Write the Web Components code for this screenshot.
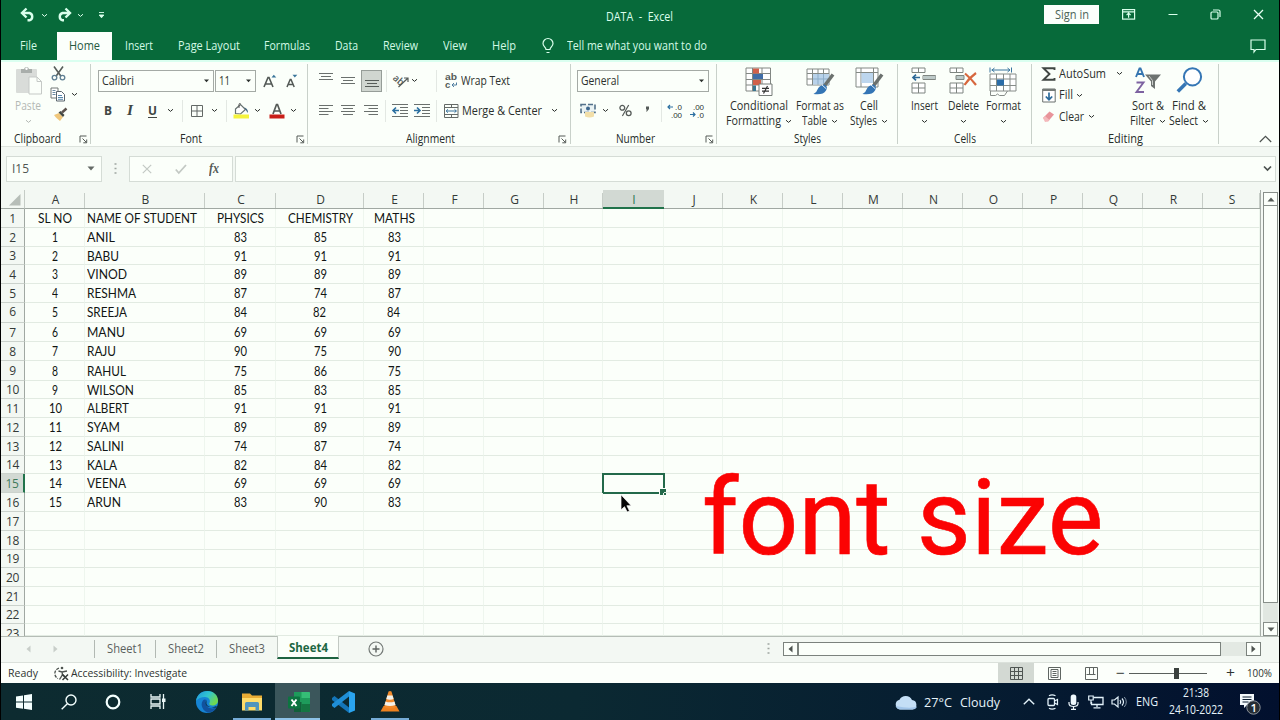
<!DOCTYPE html>
<html lang="en">
<head>
<meta charset="utf-8">
<title>DATA - Excel</title>
<style>
  body {
    margin: 0;
    width: 1280px;
    height: 720px;
    overflow: hidden;
    background: #000;
    font: 12px "Open Sans", "Noto Sans", sans-serif;
    color: #2b302d;
  }
</style>
</head>
<body>
<excel-window></excel-window>

<script>
// [width, height, markup]
const ICONS = {
  chev: [7, 5, `<path d="M1 1.2 3.5 3.4 6 1.2" fill="none" stroke="currentColor"/>`],
  tri: [7, 4, `<path d="M1 .5h5L3.500 3.200z" fill="currentColor"/>`],
  undo: [16, 14, `<path d="M2.500 5h7a3.800 3.800 0 0 1 0 7.300H7.500" fill="none" stroke="#d9ffec" stroke-width="2.400"/><path d="M6.500.5 2 5l4.500 4.500" fill="none" stroke="#d9ffec" stroke-width="2.400"/>`],
  redo: [16, 14, `<path d="M13 5H6.500a3.800 3.800 0 0 0 0 7.300H8" fill="none" stroke="#d9ffec" stroke-width="2.400"/><path d="M9.500.5 14 5 9.500 9.500" fill="none" stroke="#d9ffec" stroke-width="2.400"/>`],
  qat: [7, 7, `<path d="M1 .5h5M1.200 3h4.600L3.500 5.800z" fill="#d9ffec" stroke="#d9ffec" stroke-width=".9"/>`],
  ribbonopt: [14, 11, `<rect x=".6" y=".6" width="12" height="9.500" fill="none" stroke="#d9ffec" stroke-width="1.200"/><path d="M.6 2.800h12M6.600 8.800V4.500M4.600 6.200l2-2 2 2" fill="none" stroke="#d9ffec" stroke-width="1.200"/>`],
  min: [10, 10, `<path d="M.5 4.500h9" stroke="#d9ffec"/>`],
  restore: [11, 11, `<rect x="1" y="3" width="7" height="7" rx="1" fill="none" stroke="#d9ffec" stroke-width="1.200"/><path d="M3 1h5.500a1.500 1.500 0 0 1 1.500 1.500V8" fill="none" stroke="#d9ffec" stroke-width="1.200"/>`],
  close: [11, 11, `<path d="m1 1 9 9m0-9-9 9" stroke="#e8fff3" stroke-width="1.300"/>`],
  comment: [16, 14, `<path d="M1 1h14v9.500H6L4 13v-2.500H1z" fill="none" stroke="#d9ffec" stroke-width="1.200"/>`],
  bulb: [12, 16, `<path d="M4 11.500C4 9 1 8.500 1 5.500a5 5 0 0 1 10 0c0 3-3 3.500-3 6zM4.500 14.500h3" fill="none" stroke="#d9ffec" stroke-width="1.200"/>`],
  launcher: [9, 9, `<path d="M1 7.500V1h6.500M3.500 3.500l4 4M7.700 4.500v3.300H4.300" fill="none" stroke="#555b57"/>`],
  paste: [28, 30, `<rect x="1" y="4" width="21" height="24" rx="1" fill="#d9dcd9"/><path d="M6 4h3a2.600 2.600 0 0 1 5 0h3v4H6z" fill="#a9aeab"/><circle cx="11.500" cy="3.800" r="1.200" fill="#fff"/><path d="M14 12h8l4.500 4.500V29H14z" fill="#fbfffa" stroke="#c5c9c6"/><path d="M22 12v4.500h4.500" fill="none" stroke="#c5c9c6"/>`],
  cut: [15, 15, `<path d="M3 .5 9.800 10M12 .5 5.200 10" stroke="#575d5a" stroke-width="1.600"/><circle cx="3.500" cy="11.600" r="2.300" fill="none" stroke="#5f7f93" stroke-width="1.300"/><circle cx="11.500" cy="11.600" r="2.300" fill="none" stroke="#5f7f93" stroke-width="1.300"/>`],
  copy: [16, 15, `<path d="M1 1h7v10H1z" fill="#fff" stroke="#737976"/><path d="M2.500 3.500h3M2.500 5.500h3M2.500 7.500h3" stroke="#6a8ba3"/><path d="M6.500 4.500h5l3 3v6.500h-8z" fill="#fff" stroke="#59646c"/><path d="M8 8.500h4M8 10.500h5M8 12.300h5" stroke="#5687ac"/>`],
  painter: [15, 14, `<path d="m1 8 5-2 4 4-3 4C5 12 3 11 1 8z" fill="#f0c77c"/><path d="m5.500 5.500 2-1.500 4 4-1.500 2z" fill="#424844"/><path d="m9 5.500 4.500-4" stroke="#5b504c" stroke-width="2.500"/>`],
  agrow: [14, 14, `<path d="M1 13 5 3.500h1L10 13M2.500 10h6" fill="none" stroke="#525855" stroke-width="1.600"/><path d="m8.500 3.500 2.300-2.800 2.500 2.800z" fill="#39759a"/>`],
  ashrink: [12, 14, `<path d="M1 13 4.200 5.500h.8L8.200 13M2 10.500h5.200" fill="none" stroke="#525855" stroke-width="1.500"/><path d="m6.500.700 2.300 2.800L11.300.700z" fill="#39759a"/>`],
  borders: [14, 14, `<path d="M1.500 1.500h11v11h-11zM7 1.500v11M1.500 7h11" fill="none" stroke="#636966"/>`],
  fill: [17, 16, `<path d="m2.500 6 5-4.500 5 5-5 4.500-5-.5z" fill="#fff" stroke="#66716f" stroke-width="1.200"/><path d="M6 5V1.500q0-1.300 1.500-1" fill="none" stroke="#555"/><path d="M11 4.500q4 .5 4 5.500-2-2-2.500-4z" fill="#3f6682"/><path d="M.5 11.500h15.500v4H.5z" fill="#f4f33c"/>`],
  fontcolor: [16, 16, `<path d="M4 11 7.500 1.500h1L12 11M5 8h6" fill="none" stroke="#565b58" stroke-width="1.700"/><path d="M.5 11.500h15v4H.5z" fill="#c91e18"/>`],
  top: [14, 9, `<path d="M0 1.500h14M2 4.500h10M0 7.500h14" stroke="#6a706d"/>`],
  bottom: [14, 9, `<path d="M0 1.500h14M2 4.500h10M0 7.500h14" stroke="#565c58"/>`],
  left: [14, 11, `<path d="M0 .5h14M0 3.500h9.500M0 6.500h14M0 9.500h9.500" stroke="#6a706d"/>`],
  center: [14, 11, `<path d="M0 .5h14M2 3.500h10M0 6.500h14M2 9.500h10" stroke="#6a706d"/>`],
  right: [14, 11, `<path d="M0 .5h14M4.500 3.500H14M0 6.500h14M4.500 9.500H14" stroke="#6a706d"/>`],
  orient: [16, 14, `<text x="0" y="9" font-size="10" font-weight="600" fill="#555b58" transform="rotate(42 3 7) translate(-1 -1)" textLength="11" lengthAdjust="spacingAndGlyphs">ab</text><path d="m5.500 13 9-8.500M11 4h4v4" fill="none" stroke="#555b58" stroke-width="1.200"/>`],
  wrap: [12, 17, `<g font-family="Liberation Sans, sans-serif" font-weight="700" fill="#555b58"><text x="0" y="7.500" font-size="9.500" textLength="12" lengthAdjust="spacingAndGlyphs">ab</text><text x="0" y="16" font-size="9.500">c</text></g><path d="M11.500 10.500v2.500H7M9 11l-2 2 2 2" fill="none" stroke="#4d7c9f"/>`],
  outdent: [16, 13, `<path d="M0 .5h16M8 3.500h8M8 6.500h8M8 9.500h8M0 12.500h16" stroke="#6a706d"/><path d="M7 6.500H1.500M4 3.500l-3 3 3 3" fill="none" stroke="#2b6fa0" stroke-width="1.600"/>`],
  indent: [16, 13, `<path d="M0 .5h16M8 3.500h8M8 6.500h8M8 9.500h8M0 12.500h16" stroke="#6a706d"/><path d="M0 6.500h5.500M3 3.500l3 3-3 3" fill="none" stroke="#2b6fa0" stroke-width="1.600"/>`],
  merge: [15, 14, `<path d="M.5.5h13.500v13H.5zM.5 3.500H14M.5 10.500H14M7.500.5v3M7.500 10.500v3" fill="none" stroke="#646a67"/><path d="M2 7h10.500M4 5.300 2.200 7 4 8.700m6.500-3.400L12.300 7l-1.800 1.700" fill="none" stroke="#39739c"/>`],
  money: [17, 15, `<path d="M1 1.500h14v8H1z" fill="#e9f2f3" stroke="#53718a" stroke-width="1.600" stroke-dasharray="5 2"/><circle cx="8" cy="5.500" r="2" fill="#3e678d"/><path d="M5 9h9v4.500q-4.500 2-9 0z" fill="#f2dfa9"/>`],
  percent: [13, 13, `<circle cx="3.300" cy="3.800" r="2.400" fill="none" stroke="#555b58" stroke-width="1.300"/><circle cx="9.700" cy="9.200" r="2.400" fill="none" stroke="#555b58" stroke-width="1.300"/><path d="m9.700 1-6.300 11" stroke="#555b58" stroke-width="1.200"/>`],
  comma: [5, 7, `<path d="M1 .500h3V3L2 5.500H1L2 3.500H1z" fill="#555b58"/>`],
  incdec: [16, 15, `<g font-family="Liberation Sans, sans-serif" font-size="8" fill="#2c332f"><text x="8" y="6.500" textLength="7">.0</text><text x="4" y="14.500" textLength="11">.00</text></g><path d="M6 4H1M3 2 1 4l2 2" fill="none" stroke="#2b6fa0" stroke-width="1.200"/>`],
  decdec: [16, 15, `<g font-family="Liberation Sans, sans-serif" font-size="8" fill="#2c332f"><text x="3" y="6.500" textLength="11">.00</text><text x="7" y="14.500" textLength="7">.0</text></g><path d="M0 11.500h5M3 9.500l2 2-2 2" fill="none" stroke="#2b6fa0" stroke-width="1.200"/>`],
  cond: [28, 29, `<path d="M1 1h24.500v23H1zM1 6.500h24.500M1 12.500h24.500M1 18h24.500M7.500 1v23M17 1v23" fill="#fff" stroke="#828783"/><path d="M8 1.500h6v5H8zM8 13h8v5H8z" fill="#d1604a"/><path d="M8 7h10v5H8z" fill="#416da7"/><path d="M8 18.500h3V24H8z" fill="#39758f"/><path d="M14 17h13v11.500H14z" fill="#fff" stroke="#777d79"/><path d="M17 21.300h7M17 24.200h7M22.500 19l-4 7.500" stroke="#333" stroke-width="1.200"/>`],
  fmttable: [29, 29, `<path d="M1 2h22v16H1zM1 6.500h22M1 12h22M6.500 2v16M12 2v16M17.500 2v16" fill="#fff" stroke="#838985"/><path d="M7 7h16v10.500H7z" fill="#b9d2ea"/><path d="M7 12h16M12 7v10M17.500 7v10" stroke="#8dadc9"/><path d="m27 7.500-9 12" stroke="#6b716e" stroke-width="3.500"/><path d="M18.500 17.500q4 2.500 1.500 6-3 5-12.500 3.500 3-1 4-4.500 1.500-4 7-5z" fill="#3475b5"/><path d="m16 18 4.500 4" stroke="#dfeaf3"/>`],
  cellstyle: [28, 29, `<path d="M1 1h22v19H1zM1 5.500h22M6 1v19M18.500 1v19" fill="#fff" stroke="#838985"/><path d="M6.500 6h11.500v10H6.500z" fill="#bdd6ee"/><path d="m27 7.500-9 12" stroke="#6b716e" stroke-width="3.500"/><path d="M18.500 17.500q4 2.500 1.500 6-3 5-12.500 3.500 3-1 4-4.500 1.500-4 7-5z" fill="#3475b5"/><path d="m16 18 4.500 4" stroke="#dfeaf3"/>`],
  insert: [26, 27, `<path d="M1 1h13v4.500H1zM7.500 1v4.500M1 16h13v10H1zM7.500 16v10M1 21h13M12 8.500h12.500v4H12zM18 8.500v4" fill="#fff" stroke="#7f8581"/><path d="M12.500 9h12v3h-12z" fill="#bdc9c8"/><path d="M9 10.500H2.500M5 7.700l-3 2.800 3 2.800" fill="none" stroke="#2e6997" stroke-width="1.700"/>`],
  delete: [29, 27, `<path d="M1 1h13v4.500H1zM7.500 1v4.500M1 16h13v10H1zM7.500 16v10M1 21h13" fill="#fff" stroke="#7f8581"/><path d="M7 8.500h8v4H7z" fill="#bdc9c8" stroke="#7f8581"/><path d="M16 6.500q6 5 11 11.500M27 6q-7 5-11.500 12" fill="none" stroke="#d7673e" stroke-width="2.200"/>`],
  format: [28, 30, `<path d="M1 .5v5M22.500.5v5M2.500 3h18.500M5.500 1 3 3l2.500 2M18.500 1 21 3l-2.500 2" fill="none" stroke="#39749e"/><path d="M1 7h26v17H1zM1 12h26M1 18.500h26M7.500 7v17M14.500 7v17M21 7v17" fill="#fff" stroke="#868c88"/><path d="M8 12.500h7v6H8z" fill="#2b6ca8"/><path d="M1.500 24v4.500h5l2-1.500 2 1.500h5l3-4.500" fill="none" stroke="#868c88"/>`],
  sigma: [14, 14, `<path d="M12.500 3V1.200H1.500l6 5.800-6 5.800h11V11" fill="none" stroke="#404643" stroke-width="1.900"/>`],
  filldown: [14, 15, `<path d="M.7 1h12.500v13H.7z" fill="#fff" stroke="#6b716e"/><path d="M.5 1h13v2H.5z" fill="#747a77"/><path d="M7 4.500v7M3.800 8.500 7 11.700l3.200-3.200" fill="none" stroke="#2c6b9b" stroke-width="1.700"/>`],
  clear: [13, 13, `<path d="m1 8 6.500-6.500 4.500 3L6 11.500z" fill="#e8949a"/><path d="m1 8 2-2 4.500 4L6 11.500l-3 .5z" fill="#f4b9bb"/>`],
  sort: [28, 27, `<path d="M2 10 5.500 1.500h1L10 10M3.500 7h5" fill="none" stroke="#3475b0" stroke-width="1.900"/><path d="M2.500 15.500h7l-7 9.500h7.500" fill="none" stroke="#7d62a1" stroke-width="1.900"/><path d="M11 7.500h16l-6 7v7.500l-4-3v-4.500z" fill="#6d7370"/><path d="m15 9 3.500 4.500V18" fill="none" stroke="#cdd1ce"/>`],
  find: [27, 27, `<circle cx="16.500" cy="9.800" r="8.600" fill="#fff" stroke="#3576b5" stroke-width="2"/><path d="m9.800 16.500-8 8" stroke="#3576b5" stroke-width="3.500"/>`],
  collapse: [13, 8, `<path d="m.8 7 5.700-5.700L12.200 7" fill="none" stroke="#4c524f" stroke-width="1.200"/>`],
  dots: [3, 12, `<path d="M.5 1h2M.5 5.500h2M.5 10h2" stroke="#9fa5a1" stroke-width="1.500"/>`],
  cancel: [10, 10, `<path d="m.8.800 8.400 8.400m0-8.400L.8 9.200" stroke="#c3c9c4" stroke-width="1.200"/>`],
  enter: [12, 10, `<path d="m.8 5.500 3 3.500L11 1" fill="none" stroke="#c3c9c4" stroke-width="1.800"/>`],
  chevbold: [9, 7, `<path d="m1 1.500 3.500 3.500L8 1.500" fill="none" stroke="#4c524f" stroke-width="1.700"/>`],
  tril: [5, 8, `<path d="M4.500.5v7L.5 4z" fill="currentColor"/>`],
  trir: [5, 8, `<path d="M.5.5v7L4.500 4z" fill="currentColor"/>`],
  triu: [8, 5, `<path d="M.5 4.500h7L4 .5z" fill="currentColor"/>`],
  trid: [8, 5, `<path d="M.5.5h7L4 4.500z" fill="currentColor"/>`],
  plus: [16, 16, `<circle cx="8" cy="8" r="7" fill="none" stroke="#737976" stroke-width="1.200"/><path d="M4.500 8h7M8 4.500v7" stroke="#5d6360" stroke-width="1.400"/>`],
  access: [16, 15, `<path d="M6 2.200A5.500 5.500 0 0 0 5 12.500" fill="none" stroke="#4e5450" stroke-width="1.300" stroke-dasharray="3 1.200"/><circle cx="9" cy="2" r="1.300" fill="#4e5450"/><path d="m5.500 5 3.500 1 5-1M9.300 6v3l-2.800 4.500M9.500 8.500l2 2" fill="none" stroke="#4e5450" stroke-width="1.400"/><path d="m9.500 8.500 5.500 5.500m0-5.500L9.500 14" stroke="#333936" stroke-width="1.500"/>`],
  vnormal: [13, 13, `<path d="M.5.5h12v12H.5zM4.500.5v12M8.500.5v12M.5 4.500h12M.5 8.500h12" fill="none" stroke="#4f5552"/>`],
  vpage: [13, 13, `<path d="M.5.500h12v12H.5z" fill="none" stroke="#5f6562"/><path d="M3 2.500h7v8H3zM4.500 4.500h4M4.500 6.500h4M4.500 8.500h4" fill="none" stroke="#5f6562"/>`],
  vbreak: [13, 13, `<path d="M.5.500h12v12H.5zM4.500.500v7M8.500.500v7M1.500 7.500h9" fill="none" stroke="#5f6562"/>`],
  win: [16, 16, `<path d="m0 2.400 7-1V7.500H0zM8 1.200 16 0v7.500H8zM0 8.500h7v6.200l-7-1zM8 8.500h8V16l-8-1.200z" fill="#f4fffe"/>`],
  search: [16, 16, `<circle cx="10" cy="6" r="5" fill="none" stroke="#f4fffe" stroke-width="1.400"/><path d="M6.300 9.700.7 15.300" stroke="#f4fffe" stroke-width="1.400"/>`],
  cortana: [16, 16, `<circle cx="8" cy="8" r="6.300" fill="none" stroke="#f4fffe" stroke-width="2.200"/>`],
  taskview: [16, 15, `<path d="M1 0v3h9V0M1 15v-3h9v3M1 5h9v5H1zM13.500 0v15" fill="none" stroke="#e9f6f6" stroke-width="1.300"/><path d="M12 4.500h3.500V8H12z" fill="#e9f6f6"/>`],
  edge: [24, 24, `<defs><linearGradient id="e1" x1="0" y1="0" x2="1" y2=".5"><stop offset="0" stop-color="#2095dd"/><stop offset=".55" stop-color="#30c6cf"/><stop offset="1" stop-color="#70d84f"/></linearGradient></defs><circle cx="12" cy="12" r="11" fill="#1684d4"/><path d="M1 11C2 4.500 7 1 12.500 1 19 1 23 5.500 23 10.500c0 3.500-2.500 5-5.500 5-2.500 0-4-1-3-2.500 1.500-3-1-6-4.500-6-4 0-7 1.500-9 4z" fill="url(#e1)"/><path d="M9 9.500c-4 3-3 10 3.500 13 4 0 7.500-2 9-5-5 2-10 .5-11-3.500-.4-2 0-3.200 1-4.200z" fill="#11529e"/><path d="M11.500 10c-1.800 2-1.500 5 1 6.500 2.500 1.300 6 1 8.800-.5l.7 1.500c-4 1-9-.3-10.500-3.500z" fill="#0c304e"/>`],
  folder: [22, 20, `<path d="M1 1.500h8l2 2h10V18H1z" fill="#e9ad35"/><path d="M1 6h20v12.500H1z" fill="#ffdc69"/><path d="M4 11.500q0-1.500 1.500-1.500h11q1.500 0 1.500 1.500v7h-3.500V15h-7v3.500H4z" fill="#5195bd"/>`],
  excel: [24, 22, `<path d="M7 1h15q1 0 1 1v18q0 1-1 1H7z" fill="#1e9b5b"/><path d="M14.500 1H22q1 0 1 1v5h-8.500z" fill="#35bd76"/><path d="M7 11h7.500v10H7z" fill="#12603a"/><path d="M14.500 13H23v7q0 1-1 1h-7.500z" fill="#157542"/><rect x="1" y="5.500" width="12" height="12" rx="1" fill="#0d7440"/><path d="m4.500 8.500 5 6.500m0-6.500-5 6.500" stroke="#fff" stroke-width="1.900"/>`],
  vscode: [25, 24, `<path d="M18 1 24 3.500v17L18 23z" fill="#2aa4ef"/><path d="M1 8 3.500 6 18 17.500V23L1 10z" fill="#1475b8"/><path d="M1 16 3.500 18 18 6.500V1L1 14z" fill="#1f8ed6"/>`],
  vlc: [20, 23, `<path d="M3.500 16h13l3 5.500H.5z" fill="#ed8120"/><path d="M8.500 1.500q1.500-1 3 0L16 17q-6 3-12 0z" fill="#f18a2b"/><path d="m7.300 5.500 5.300.1 1 3.500q-3.600 1.300-7.300 0zM5.500 11.500q4.500 1.700 9 0l1 3.500q-5.500 2-11 0z" fill="#f3f1e9"/>`],
  cloud: [24, 18, `<path d="M6 16.500a5 5 0 0 1-.5-9.800A7 7 0 0 1 18 7a4.800 4.800 0 0 1 .5 9.500z" fill="#c4dff6"/><path d="M1.500 13q2 3.500 5 3.500h12q3.500 0 4.500-3-6 2.500-21.500-.5z" fill="#a2c6ea"/>`],
  up: [12, 7, `<path d="m.8 6.200 5.200-5 5.200 5" fill="none" stroke="#e3f2fa" stroke-width="1.400"/>`],
  cam: [12, 16, `<rect x="1" y="4.500" width="6.500" height="7" rx="1" fill="none" stroke="#e3f2fa" stroke-width="1.300"/><path d="m7.500 7 3-1.500v5l-3-1.500M2 1.800Q5 0 8.500 1.800M2 14.200q3 1.800 6.500 0" fill="none" stroke="#e3f2fa" stroke-width="1.200"/>`],
  mic: [11, 16, `<rect x="2.700" y=".5" width="5.600" height="10.500" rx="2.500" fill="#eef8fd"/><path d="M1 8v1.500q0 3 4.500 3t4.500-3V8M5.500 12.500v2.500M3 15.300h5" fill="none" stroke="#eef8fd" stroke-width="1.200"/>`],
  net: [16, 14, `<path d="M5.500 2.500H15v7H3.500V7M9 9.500V12M5.500 12.800h7" fill="none" stroke="#e3f2fa" stroke-width="1.300"/><path d="M.7 1h4.500v4H.7zM3 5v4" fill="none" stroke="#e3f2fa" stroke-width="1.200"/>`],
  sound: [17, 14, `<path d="M1 5h2.500L7 2v10L3.500 9H1z" fill="none" stroke="#e3f2fa" stroke-width="1.200"/><path d="M9 5q1.500 2 0 4M11 3.500q3 3.500 0 7" fill="none" stroke="#e3f2fa" stroke-width="1.200"/><path d="M13.300 2q4 5 0 10" fill="none" stroke="#8293a4"/>`],
  notif: [22, 24, `<path d="M1 2h14v11H8l-3 3v-3H1z" fill="#f3f9fc"/><path d="M3.500 5h9M3.500 7.500h9M3.500 10h6" stroke="#0a1c30"/><circle cx="14.500" cy="15.500" r="6.700" fill="#252d35" stroke="#8b9299"/><text x="11.500" y="19.700" font-size="11.500" font-weight="600" fill="#fff">1</text>`],
  cursor: [13, 20, `<path d="M2 .8v15l3.500-3.100 2.700 5.300 2.300-1.100-2.600-5.200h4.300z" fill="#050505" stroke="#fff" stroke-width=".7"/>`],
  corner: [12, 12, `<path d="M11.500 0v11.500H0z" fill="#b7beb8"/>`]
};

class UiIcon extends HTMLElement {
  connectedCallback() {
    const [w, h, body] = ICONS[this.getAttribute("name")];
    this.attachShadow({ mode: "open" }).innerHTML = `
      <style>
        :host { display: block; flex: none; width: ${w}px; height: ${h}px; margin-left: ${this.getAttribute("ml") || 0}px; }
        svg { display: block; overflow: visible; }
      </style>
      <svg width="${w}" height="${h}" viewBox="0 0 ${w} ${h}">${body}</svg>`;
  }
}

// Single line label, condensed or stretched to the width in "w"
class UiText extends HTMLElement {
  connectedCallback() {
    const w = Number(this.getAttribute("w"));
    this.attachShadow({ mode: "open" }).innerHTML = `
      <style>
        :host { display: block; flex: none; white-space: nowrap; width: ${w}px; line-height: 16px; margin-left: ${this.getAttribute("ml") || 0}px; }
        span { display: inline-block; transform-origin: 0 50%; }
        :host([underline]) span { text-decoration: underline; text-underline-offset: 2px; }
      </style>
      <span><slot></slot></span>`;
    const span = this.shadowRoot.querySelector("span");
    const natural = span.getBoundingClientRect().width;
    if (natural) span.style.transform = `scaleX(${w / natural})`;
  }
}

class TitleBar extends HTMLElement {
  constructor() {
    super();
    this.attachShadow({ mode: "open" }).innerHTML = `
      <style>
        :host { display: flex; align-items: center; height: 32px; background: #076a3a; color: #dcffed; box-sizing: border-box; }
        ui-icon { margin-top: -2px; }
        .title { margin-top: 1px; }
        .signin { width: 55px; height: 19px; margin: -3px 0 0 371px; background: #fbfffb; color: #4b6356; display: flex; align-items: center; justify-content: center; }
        .win { display: flex; align-items: center; margin-top: -3px; }
        .win ui-icon { margin-top: 0; }
      </style>
      <ui-icon name="undo" ml="19"></ui-icon><ui-icon name="chev" ml="5"></ui-icon>
      <ui-icon name="redo" ml="8"></ui-icon><ui-icon name="chev" ml="5"></ui-icon>
      <ui-icon name="qat" ml="14"></ui-icon>
      <ui-text class="title" w="67" ml="501">DATA&nbsp; -&nbsp; Excel</ui-text>
      <div class="signin"><ui-text w="34">Sign in</ui-text></div>
      <div class="win">
        <ui-icon name="ribbonopt" ml="23"></ui-icon><ui-icon name="min" ml="32"></ui-icon>
        <ui-icon name="restore" ml="32"></ui-icon><ui-icon name="close" ml="32"></ui-icon>
      </div>`;
  }
}

class RibbonTabs extends HTMLElement {
  constructor() {
    super();
    this.attachShadow({ mode: "open" }).innerHTML = `
      <style>
        :host { display: flex; align-items: center; height: 28px; background: #076a3a; color: #d3fae6; }
        .active { display: flex; align-items: center; justify-content: center; width: 55px; height: 28px; margin-left: 20px; background: #fbfffb; color: #26593f; }
      </style>
      <ui-text w="17" ml="19">File</ui-text>
      <div class="active"><ui-text w="31">Home</ui-text></div>
      <ui-text w="28" ml="13">Insert</ui-text>
      <ui-text w="62" ml="25">Page Layout</ui-text>
      <ui-text w="46" ml="24">Formulas</ui-text>
      <ui-text w="23" ml="25">Data</ui-text>
      <ui-text w="35" ml="25">Review</ui-text>
      <ui-text w="24" ml="25">View</ui-text>
      <ui-text w="24" ml="25">Help</ui-text>
      <ui-icon name="bulb" ml="26"></ui-icon>
      <ui-text w="140" ml="13">Tell me what you want to do</ui-text>
      <ui-icon name="comment" ml="543"></ui-icon>`;
  }
}

class RibbonGroup extends HTMLElement {
  constructor() {
    super();
    const launcher = this.hasAttribute("launcher");
    this.attachShadow({ mode: "open" }).innerHTML = `
      <style>
        :host { display: grid; grid-template-rows: 67px 16px; flex: none; box-sizing: border-box; height: 85px; padding-top: 2px; width: ${this.getAttribute("width")}px; background: linear-gradient(#c9d1ca, #c9d1ca) right 2px / 1px 80px no-repeat; }
        .body { display: flex; }
        .foot { display: flex; align-items: center; color: #262c29; }
        .name { flex: 1; display: flex; justify-content: center; }
        .foot.more .name { padding-right: 5px; }
      </style>
      <div class="body"><slot></slot></div>
      <div class="foot${launcher ? " more" : ""}">
        <div class="name"><ui-text w="${this.getAttribute("lw")}">${this.getAttribute("label")}</ui-text></div>
        ${launcher ? `<ui-icon name="launcher" style="margin-right:${this.getAttribute("launcher")}px"></ui-icon>` : ""}
      </div>`;
  }
}

class BigButton extends HTMLElement {
  constructor() {
    super();
    const a = (n) => this.getAttribute(n);
    this.attachShadow({ mode: "open" }).innerHTML = `
      <style>
        :host { display: grid; grid-template-rows: 33px 16px 14px; justify-items: center; flex: none; width: ${a("width")}px; padding-top: 1px; margin-left: ${a("ml") || 0}px; }
        :host([dim]) { color: #b4b9b5; }
        .pic { padding-top: 2px; }
        :host([dim]) .pic { padding: 0 0 0 2px; }
        .second { display: flex; align-items: center; gap: 4px; }
      </style>
      <div class="pic"><ui-icon name="${a("icon")}"></ui-icon></div>
      <ui-text w="${a("w1")}">${a("l1")}</ui-text>
      <div class="second">${a("l2") ? `<ui-text w="${a("w2")}">${a("l2")}</ui-text>` : ""}<ui-icon name="chev"></ui-icon></div>`;
  }
}

// Bordered dropdown
class ComboBox extends HTMLElement {
  constructor() {
    super();
    this.attachShadow({ mode: "open" }).innerHTML = `
      <style>
        :host { display: flex; align-items: center; justify-content: space-between; flex: none; box-sizing: border-box; height: 22px; padding: 0 3px; border: 1px solid #a4aaa5; width: ${this.getAttribute("width")}px; margin-left: ${this.getAttribute("ml") || 0}px; }
      </style>
      <slot></slot><ui-icon name="tri"></ui-icon>`;
  }
}

class ExcelRibbon extends HTMLElement {
  constructor() {
    super();
    this.attachShadow({ mode: "open" }).innerHTML = `
      <style>
        :host { display: flex; height: 87px; box-sizing: border-box; padding-top: 2px; border-bottom: 1px solid #dde3dd; background: #fbfffa; box-shadow: inset 0 2px #dafff0; }
        .col { display: flex; flex-direction: column; }
        .row { display: flex; align-items: center; height: 27px; }
        .row.first { height: 33px; }
        .small { display: flex; align-items: center; height: 21.500px; }
        .edit { margin-top: -1px; }
        .sep { width: 1px; height: 22px; background: #e3e8e3; flex: none; }
        .b { font-weight: 700; color: #404643; }
        .i { font: italic 700 14px "Liberation Serif", serif; color: #404643; }
        .u { font-weight: 700; color: #404643; }
        .on { display: flex; align-items: flex-end; justify-content: center; width: 19px; height: 20px; margin-left: 6px; border: 1px solid #969d98; background: #d0d6d0; }
        .on ui-icon { margin-bottom: 3px; }
        .end { flex: 1; display: flex; align-items: flex-end; justify-content: flex-end; padding: 0 7px 3px 0; }
      </style>
      <ribbon-group label="Clipboard" lw="47" width="90" launcher="3" style="--shift:0">
        <big-button dim width="42" ml="6" icon="paste" l1="Paste" w1="26"></big-button>
        <div class="col">
          <div class="small" style="height:19px"><ui-icon name="cut" ml="2"></ui-icon></div>
          <div class="small" style="height:23px"><ui-icon name="copy" ml="1"></ui-icon><ui-icon name="chev" ml="5"></ui-icon></div>
          <div class="small" style="height:16px"><ui-icon name="painter" ml="4"></ui-icon></div>
        </div>
      </ribbon-group>
      <ribbon-group label="Font" lw="22" width="217" launcher="3">
        <div class="col">
          <div class="row first">
            <combo-box width="116" ml="7"><ui-text w="32">Calibri</ui-text></combo-box>
            <combo-box width="41" ml="1"><ui-text w="11">11</ui-text></combo-box>
            <ui-icon name="agrow" ml="7"></ui-icon><ui-icon name="ashrink" ml="9"></ui-icon>
          </div>
          <div class="row">
            <ui-text class="b" w="8" ml="13">B</ui-text><ui-text class="i" w="6" ml="15">I</ui-text>
            <ui-text class="u" underline w="9" ml="15">U</ui-text><ui-icon name="chev" ml="10"></ui-icon>
            <div class="sep" style="margin-left:8px"></div>
            <ui-icon name="borders" ml="7"></ui-icon><ui-icon name="chev" ml="7"></ui-icon>
            <div class="sep" style="margin-left:8px"></div>
            <ui-icon name="fill" ml="6"></ui-icon><ui-icon name="chev" ml="4"></ui-icon>
            <ui-icon name="fontcolor" ml="8"></ui-icon><ui-icon name="chev" ml="5"></ui-icon>
          </div>
        </div>
      </ribbon-group>
      <ribbon-group label="Alignment" lw="49" width="263" launcher="4">
        <div class="col">
          <div class="row first">
            <ui-icon name="top" ml="11" style="margin-top:-9px"></ui-icon><ui-icon name="top" ml="8"></ui-icon>
            <div class="on"><ui-icon name="bottom"></ui-icon></div>
            <div class="sep" style="margin-left:4px"></div>
            <ui-icon name="orient" ml="6"></ui-icon><ui-icon name="chev" ml="2"></ui-icon>
            <div class="sep" style="margin-left:18px"></div>
            <ui-icon name="wrap" ml="8"></ui-icon><ui-text w="49" ml="4">Wrap Text</ui-text>
          </div>
          <div class="row">
            <ui-icon name="left" ml="11"></ui-icon><ui-icon name="center" ml="8"></ui-icon><ui-icon name="right" ml="9"></ui-icon>
            <div class="sep" style="margin-left:7px"></div>
            <ui-icon name="outdent" ml="6"></ui-icon><ui-icon name="indent" ml="6"></ui-icon>
            <div class="sep" style="margin-left:6px"></div>
            <ui-icon name="merge" ml="7"></ui-icon><ui-text w="80" ml="3">Merge &amp; Center</ui-text>
            <ui-icon name="chev" ml="9"></ui-icon>
          </div>
        </div>
      </ribbon-group>
      <ribbon-group label="Number" lw="39" width="146" launcher="3">
        <div class="col">
          <div class="row first"><combo-box width="132" ml="6"><ui-text w="38">General</ui-text></combo-box></div>
          <div class="row">
            <ui-icon name="money" ml="9"></ui-icon><ui-icon name="chev" ml="5"></ui-icon>
            <ui-icon name="percent" ml="10"></ui-icon><ui-icon name="comma" ml="13" style="margin-top:-3px"></ui-icon>
            <div class="sep" style="margin-left:11px"></div>
            <ui-icon name="incdec" ml="5"></ui-icon><ui-icon name="decdec" ml="7"></ui-icon>
          </div>
        </div>
      </ribbon-group>
      <ribbon-group label="Styles" lw="27" width="181">
        <big-button width="73" ml="5" icon="cond" l1="Conditional" w1="58" l2="Formatting" w2="55"></big-button>
        <big-button width="50" icon="fmttable" l1="Format as" w1="48" l2="Table" w2="25"></big-button>
        <big-button width="48" icon="cellstyle" l1="Cell" w1="18" l2="Styles" w2="27"></big-button>
      </ribbon-group>
      <ribbon-group label="Cells" lw="22" width="134">
        <big-button width="40" ml="6" icon="insert" l1="Insert" w1="27"></big-button>
        <big-button width="39" icon="delete" l1="Delete" w1="31"></big-button>
        <big-button width="40" icon="format" l1="Format" w1="35"></big-button>
      </ribbon-group>
      <ribbon-group label="Editing" lw="35" width="187">
        <div class="col edit" style="width:96px">
          <div class="small"><ui-icon name="sigma" ml="10"></ui-icon><ui-text w="47" ml="3">AutoSum</ui-text><ui-icon name="chev" ml="10"></ui-icon></div>
          <div class="small"><ui-icon name="filldown" ml="10"></ui-icon><ui-text w="14" ml="3">Fill</ui-text><ui-icon name="chev" ml="3"></ui-icon></div>
          <div class="small"><ui-icon name="clear" ml="10"></ui-icon><ui-text w="25" ml="4">Clear</ui-text><ui-icon name="chev" ml="4"></ui-icon></div>
        </div>
        <big-button width="40" icon="sort" l1="Sort &amp;amp;" w1="32" l2="Filter" w2="25"></big-button>
        <big-button width="42" icon="find" l1="Find &amp;amp;" w1="34" l2="Select" w2="29"></big-button>
      </ribbon-group>
      <div class="end"><ui-icon name="collapse"></ui-icon></div>`;
  }
}

class FormulaBar extends HTMLElement {
  constructor() {
    super();
    this.attachShadow({ mode: "open" }).innerHTML = `
      <style>
        :host { display: flex; align-items: center; height: 43px; background: #f3f8f3; }
        .box { display: flex; align-items: center; box-sizing: border-box; height: 26px; border: 1px solid #d5dcd6; background: #fbfffa; }
        .name { width: 96px; margin-left: 5px; color: #505653; }
        .tools { width: 104px; margin-left: 12px; }
        .input { flex: 1; margin: 0 3px 0 2px; justify-content: flex-end; padding-right: 3px; }
        .fx { font: italic 700 14px "Liberation Serif", serif; color: #555b58; }
      </style>
      <div class="box name"><ui-text w="17" ml="5">I15</ui-text><ui-icon name="trid" ml="58" style="color:#646a66"></ui-icon></div>
      <ui-icon name="dots" ml="12"></ui-icon>
      <div class="box tools"><ui-icon name="cancel" ml="12"></ui-icon><ui-icon name="enter" ml="23"></ui-icon><ui-text class="fx" w="10" ml="22">fx</ui-text></div>
      <div class="box input"><ui-icon name="chevbold"></ui-icon></div>`;
  }
}

const COLS = [60, 120, 71, 88, 60, 60, 60, 59, 61, 59, 60, 60, 60, 60, 60, 60, 60, 60, 57];
const ROWS = [19, 19, 18, 19, 19, 20, 19, 19, 20, 18, 19, 19, 19, 18, 19, 19, 19, 19, 18, 19, 19, 18, 12];
const NAMES = [["ANIL", 28], ["BABU", 32], ["VINOD", 40], ["RESHMA", 49], ["SREEJA", 40], ["MANU", 38], ["RAJU", 29], ["RAHUL", 39], ["WILSON", 47], ["ALBERT", 42], ["SYAM", 33], ["SALINI", 37], ["KALA", 30], ["VEENA", 39], ["ARUN", 34]];
const MARKS = [[83, 85, 83], [91, 91, 91], [89, 89, 89], [87, 74, 87], [84, 82, 84], [69, 69, 69], [90, 75, 90], [75, 86, 75], [85, 83, 85], [91, 91, 91], [89, 89, 89], [74, 87, 74], [82, 84, 82], [69, 69, 69], [83, 90, 83]];

class SheetGrid extends HTMLElement {
  constructor() {
    super();
    const heads = [["SL NO", 34], ["NAME OF STUDENT", 110], ["PHYSICS", 47], ["CHEMISTRY", 65], ["MATHS", 41]];
    const value = (r, c) => {
      if (c > 4 || r > 15) return null;
      if (r === 0) return heads[c];
      if (c === 0) return [r, r > 9 ? 13 : 6];
      if (c === 1) return NAMES[r - 1];
      return [MARKS[r - 1][c - 2], 13];
    };
    let html = `<div class="all"><ui-icon name="corner"></ui-icon></div>`;
    COLS.forEach((_, c) => {
      html += `<div class="ch${c === 8 ? " on" : ""}">${String.fromCharCode(65 + c)}</div>`;
    });
    ROWS.forEach((_, r) => {
      html += `<div class="rh${r === 14 ? " on" : ""}${r === 5 ? " tall" : ""}">${r + 1}</div>`;
      COLS.forEach((_, c) => {
        const v = value(r, c);
        const cls = "cell" + (c === 1 ? " name" : "") + (r === 5 ? " tall" : "");
        const inner = v ? `<ui-text w="${v[1]}">${v[0]}</ui-text>` : "";
        html += `<div class="${cls}">${inner}${r === 14 && c === 8 ? `<div class="sel"></div>` : ""}</div>`;
      });
    });
    this.attachShadow({ mode: "open" }).innerHTML = `
      <style>
        :host { display: grid; width: 1260px; height: 446px; box-sizing: border-box; flex: none;
          grid-template-columns: 24px ${COLS.map((w) => w + "px").join(" ")};
          grid-template-rows: 19px ${ROWS.map((h) => h + "px").join(" ")};
          background: #fbfffa; border-right: 1px solid #a8afa9; }
        div { box-sizing: border-box; min-width: 0; min-height: 0; }
        .all { display: flex; justify-content: flex-end; align-items: flex-end; padding: 0 3px 2px 0; background: #f3f8f3; border-right: 1px solid #c5ccc6; border-bottom: 1px solid #a0a8a2; }
        .ch { background: linear-gradient(#c6cdc7, #c6cdc7) right 3px / 1px 16px no-repeat #f3f8f3; border-bottom: 1px solid #a0a8a2; padding-left: 1px; text-align: center; line-height: 19px; color: #343a37; }
        .ch.on { background: #d2d9d3; border-bottom: 2px solid #21734b; color: #2f7753; }
        .rh { display: flex; align-items: center; justify-content: center; overflow: hidden; background: #f3f8f3; border-right: 1px solid #a0a8a2; border-bottom: 1px solid #cbd2cc; padding-top: 1px; color: #343a37; line-height: 18px; letter-spacing: -.3px; }
        .rh.on { background: #d2d9d3; border-right: 2px solid #21734b; color: #3f7b5c; }
        .rh:nth-last-child(20) { align-items: flex-start; border-bottom: 0; }
        .cell { display: flex; align-items: center; justify-content: center; border-right: 1px solid #eef6ee; border-bottom: 1px solid #e2ebe2; font: 13px Lato, "Open Sans", sans-serif; color: #111513; position: relative; padding-left: 1px; }
        .name { justify-content: flex-start; padding-left: 2px; }
        .tall { padding: 0 0 2px; }
        .name.tall { padding-left: 2px; }
        .sel { position: absolute; left: -1px; top: -1px; width: 63px; height: 21px; border: 2px solid #23694a; }
        .sel::after { content: ""; position: absolute; right: -3px; bottom: -3px; width: 6px; height: 6px; background: #23694a; border: 1px solid #fbfffa; border-width: 1px 0 0 1px; }
      </style>${html}`;
  }
}

class ScrollColumn extends HTMLElement {
  constructor() {
    super();
    this.attachShadow({ mode: "open" }).innerHTML = `
      <style>
        :host { display: flex; flex-direction: column; flex: 1; padding: 2px 1px 0 2px; background: #f3f8f3; color: #565c58; }
        div { box-sizing: border-box; border: 1px solid #888f8a; background: #fbfffa; }
        .btn { height: 14px; display: flex; align-items: center; justify-content: center; }
        .thumb { height: 397px; border-top: 0; }
        .track { flex: 1; border: 0; background: #e1e7e1; }
      </style>
      <div class="btn"><ui-icon name="triu"></ui-icon></div>
      <div class="thumb"></div><div class="track"></div>
      <div class="btn"><ui-icon name="trid"></ui-icon></div>`;
  }
}

class SheetTabs extends HTMLElement {
  constructor() {
    super();
    this.attachShadow({ mode: "open" }).innerHTML = `
      <style>
        :host { display: flex; height: 27px; box-sizing: border-box; border-top: 1px solid #b5bdb6; border-bottom: 1px solid #dbe1db; background: #f3f8f3; color: #5a605d; font-size: 12.500px; }
        .nav { display: flex; align-items: center; width: 93px; height: 24px; color: #c8cec9; }
        .tab { display: flex; align-items: center; justify-content: center; box-sizing: border-box; width: 61px; height: 18px; margin-top: 3px; padding-right: 1px; border-left: 1px solid #b2b9b3; }
        .active { width: 62px; height: 23px; margin-top: -1px; padding: 3px 0 0; border: 0 solid #c2c9c3; border-width: 0 1px 2px; border-bottom-color: #1d6340; background: #fbfffa; color: #1d6743; font-weight: 700; }
        .fill { flex: 1; display: flex; align-items: center; height: 24px; }
        .btn, .thumb { box-sizing: border-box; height: 14px; border: 1px solid #7b827d; background: #fbfffa; }
        .btn { width: 15px; display: flex; align-items: center; justify-content: center; color: #4d534f; }
        .thumb { width: 424px; border-left-width: 2px; margin-left: -1px; }
        .track { width: 25px; height: 14px; background: #e3e9e3; }
      </style>
      <div class="nav"><ui-icon name="tril" ml="25"></ui-icon><ui-icon name="trir" ml="22"></ui-icon></div>
      <div class="tab"><ui-text w="36">Sheet1</ui-text></div>
      <div class="tab"><ui-text w="36">Sheet2</ui-text></div>
      <div class="tab"><ui-text w="36">Sheet3</ui-text></div>
      <div class="tab active"><ui-text w="39">Sheet4</ui-text></div>
      <div class="fill">
        <ui-icon name="plus" ml="29"></ui-icon>
        <ui-icon name="dots" ml="383"></ui-icon>
        <div class="btn" style="margin-left:13px"><ui-icon name="tril"></ui-icon></div>
        <div class="thumb"></div><div class="track"></div>
        <div class="btn"><ui-icon name="trir"></ui-icon></div>
      </div>`;
  }
}

class StatusBar extends HTMLElement {
  constructor() {
    super();
    this.attachShadow({ mode: "open" }).innerHTML = `
      <style>
        :host { display: flex; align-items: center; height: 20px; background: #fcfffb; color: #2e3431; font-size: 11.500px; }
        ui-text { margin-top: -1px; }
        .view { display: flex; align-items: center; justify-content: center; width: 36px; height: 20px; margin-left: 811px; background: #d3d9d3; }
        .slider { width: 78px; height: 12px; margin-left: 4px; display: flex; align-items: center; justify-content: center; background: linear-gradient(#5a605c, #5a605c) 0 6px / 100% 1px no-repeat; }
        .slider i { width: 5px; height: 11px; margin-left: 16px; background: #3b413e; }
        .sign { font-size: 14px; }
      </style>
      <ui-text w="30" ml="7">Ready</ui-text>
      <ui-icon name="access" ml="15"></ui-icon>
      <ui-text w="116" ml="2">Accessibility: Investigate</ui-text>
      <div class="view"><ui-icon name="vnormal"></ui-icon></div>
      <ui-icon name="vpage" ml="14"></ui-icon><ui-icon name="vbreak" ml="24"></ui-icon>
      <ui-text class="sign" w="9" ml="18">−</ui-text>
      <div class="slider"><i></i></div>
      <ui-text class="sign" w="9" ml="19">+</ui-text>
      <ui-text w="25" ml="12">100%</ui-text>`;
  }
}

class TaskBar extends HTMLElement {
  constructor() {
    super();
    this.attachShadow({ mode: "open" }).innerHTML = `
      <style>
        :host { display: flex; height: 37px; background: linear-gradient(90deg, #0d2b30, #0b2932 45%, #061d31 75%, #02102e); color: #e6f3fa; }
        .app { display: flex; align-items: center; justify-content: center; box-sizing: border-box; width: 46px; height: 37px; }
        .open { box-shadow: inset 0 -2px #75abd6; width: 38px; margin: 0 4px; }
        .now { width: 45px; margin: 0; background: #3b565b; box-shadow: inset 0 -2px #8ec2e7; }
        .tray { flex: 1; display: flex; align-items: center; }
        .clock { display: flex; flex-direction: column; align-items: center; width: 56px; margin: -1px 0 0 10px; gap: 1px; font-size: 12px; }
      </style>
      <div class="app"><ui-icon name="win"></ui-icon></div>
      <div class="app" style="width:44px"><ui-icon name="search"></ui-icon></div>
      <div class="app" style="width:44px"><ui-icon name="cortana"></ui-icon></div>
      <div class="app" style="width:46px"><ui-icon name="taskview"></ui-icon></div>
      <div class="app" style="width:49px"><ui-icon name="edge" ml="2"></ui-icon></div>
      <div class="app open" style="margin:0 4px 0 3px"><ui-icon name="folder"></ui-icon></div>
      <div class="app open now"><ui-icon name="excel" ml="3"></ui-icon></div>
      <div class="app" style="width:47px"><ui-icon name="vscode"></ui-icon></div>
      <div class="app open"><ui-icon name="vlc"></ui-icon></div>
      <div class="tray">
        <ui-icon name="cloud" ml="481"></ui-icon>
        <ui-text w="28" ml="6" style="font-size:13px">27°C</ui-text><ui-text w="40" ml="8" style="font-size:13px">Cloudy</ui-text>
        <ui-icon name="up" ml="23"></ui-icon><ui-icon name="cam" ml="12"></ui-icon><ui-icon name="mic" ml="9"></ui-icon>
        <ui-icon name="net" ml="9"></ui-icon><ui-icon name="sound" ml="7"></ui-icon>
        <ui-text w="22" ml="8">ENG</ui-text>
        <div class="clock"><ui-text w="26">21:38</ui-text><ui-text w="54">24-10-2022</ui-text></div>
        <ui-icon name="notif" ml="15" style="margin-top:4px"></ui-icon>
      </div>`;
  }
}

class ExcelWindow extends HTMLElement {
  constructor() {
    super();
    this.attachShadow({ mode: "open" }).innerHTML = `
      <style>
        :host { display: flex; flex-direction: column; position: relative; width: 1278px; height: 720px; margin-left: 1px; background: #f3f8f3; }
        .work { display: flex; height: 446px; }
        .caption { position: absolute; left: 701px; top: 457px; font: 105px/123px Roboto, sans-serif; color: #fb0303; white-space: nowrap; -webkit-text-stroke: .6px #fb0303; }
        .pointer { position: absolute; left: 618px; top: 494px; }
      </style>
      <title-bar></title-bar>
      <ribbon-tabs></ribbon-tabs>
      <excel-ribbon></excel-ribbon>
      <formula-bar></formula-bar>
      <div class="work"><sheet-grid></sheet-grid><scroll-column></scroll-column></div>
      <sheet-tabs></sheet-tabs>
      <status-bar></status-bar>
      <task-bar></task-bar>
      <ui-icon class="pointer" name="cursor"></ui-icon>
      <div class="caption">font size</div>`;
  }
}

customElements.define("excel-window", ExcelWindow);
customElements.define("title-bar", TitleBar);
customElements.define("ribbon-tabs", RibbonTabs);
customElements.define("excel-ribbon", ExcelRibbon);
customElements.define("ribbon-group", RibbonGroup);
customElements.define("big-button", BigButton);
customElements.define("combo-box", ComboBox);
customElements.define("formula-bar", FormulaBar);
customElements.define("sheet-grid", SheetGrid);
customElements.define("scroll-column", ScrollColumn);
customElements.define("sheet-tabs", SheetTabs);
customElements.define("status-bar", StatusBar);
customElements.define("task-bar", TaskBar);
customElements.define("ui-icon", UiIcon);
// defined last: it measures text once every parent has its font
customElements.define("ui-text", UiText);
</script>
</body>
</html>
